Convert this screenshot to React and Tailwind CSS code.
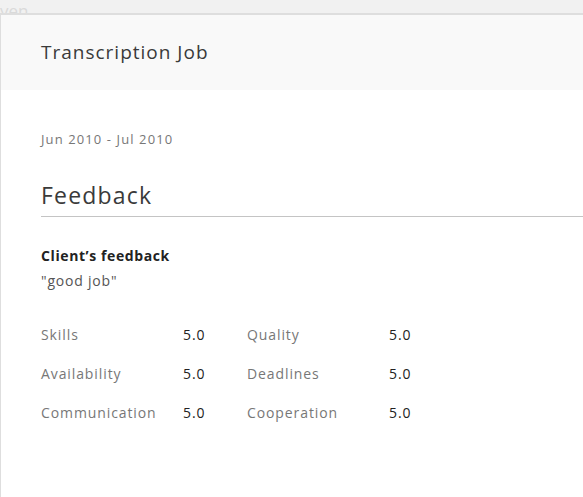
import React from "react";

const rows = [
  ["Skills", "5.0", "Quality", "5.0"],
  ["Availability", "5.0", "Deadlines", "5.0"],
  ["Communication", "5.0", "Cooperation", "5.0"],
];

export default function App() {
  return (
    <div
      className="w-[583px] h-[497px] overflow-hidden bg-[#f1f1f1] flex flex-col"
      style={{ fontFamily: '"Open Sans", "Liberation Sans", sans-serif' }}
    >
      <div className="h-[13px] shrink-0 overflow-hidden relative">
        <span className="absolute left-0 top-[1px] text-[17px] leading-[20px] text-[#dadada]">ven</span>
      </div>
      <div className="flex-1 flex flex-col bg-white border-t-2 border-l border-[#dedede]">
        <div className="h-[75px] shrink-0 bg-[#f9f9f9] flex items-center pl-[40px]">
          <h1 className="text-[19px] text-[#3a3a3a] tracking-[1px]">Transcription Job</h1>
        </div>
        <div className="pl-[40px] flex flex-col">
          <div className="mt-[40px] text-[13px] leading-[18px] text-[#777] tracking-[1.1px]">Jun 2010 - Jul 2010</div>
          <div className="mt-[32px] text-[23px] leading-[30px] text-[#3a3a3a] tracking-[1.2px] pb-[6px] border-b border-[#c4c4c4]">
            Feedback
          </div>
          <div className="mt-[29px] text-[14px] leading-[20px] font-bold text-[#222] tracking-[0.6px]">Client’s feedback</div>
          <div className="mt-[5px] text-[14px] leading-[20px] text-[#555] tracking-[0.8px]">"good job"</div>
          <div className="mt-[34px] flex flex-col gap-[19px]">
            {rows.map((r) => (
              <div key={r[0]} className="flex text-[14px] leading-[20px] tracking-[0.9px]">
                <span className="w-[142px] text-[#777]">{r[0]}</span>
                <span className="w-[64px] text-[#222]">{r[1]}</span>
                <span className="w-[142px] text-[#777]">{r[2]}</span>
                <span className="w-[64px] text-[#222]">{r[3]}</span>
              </div>
            ))}
          </div>
        </div>
      </div>
    </div>
  );
}
